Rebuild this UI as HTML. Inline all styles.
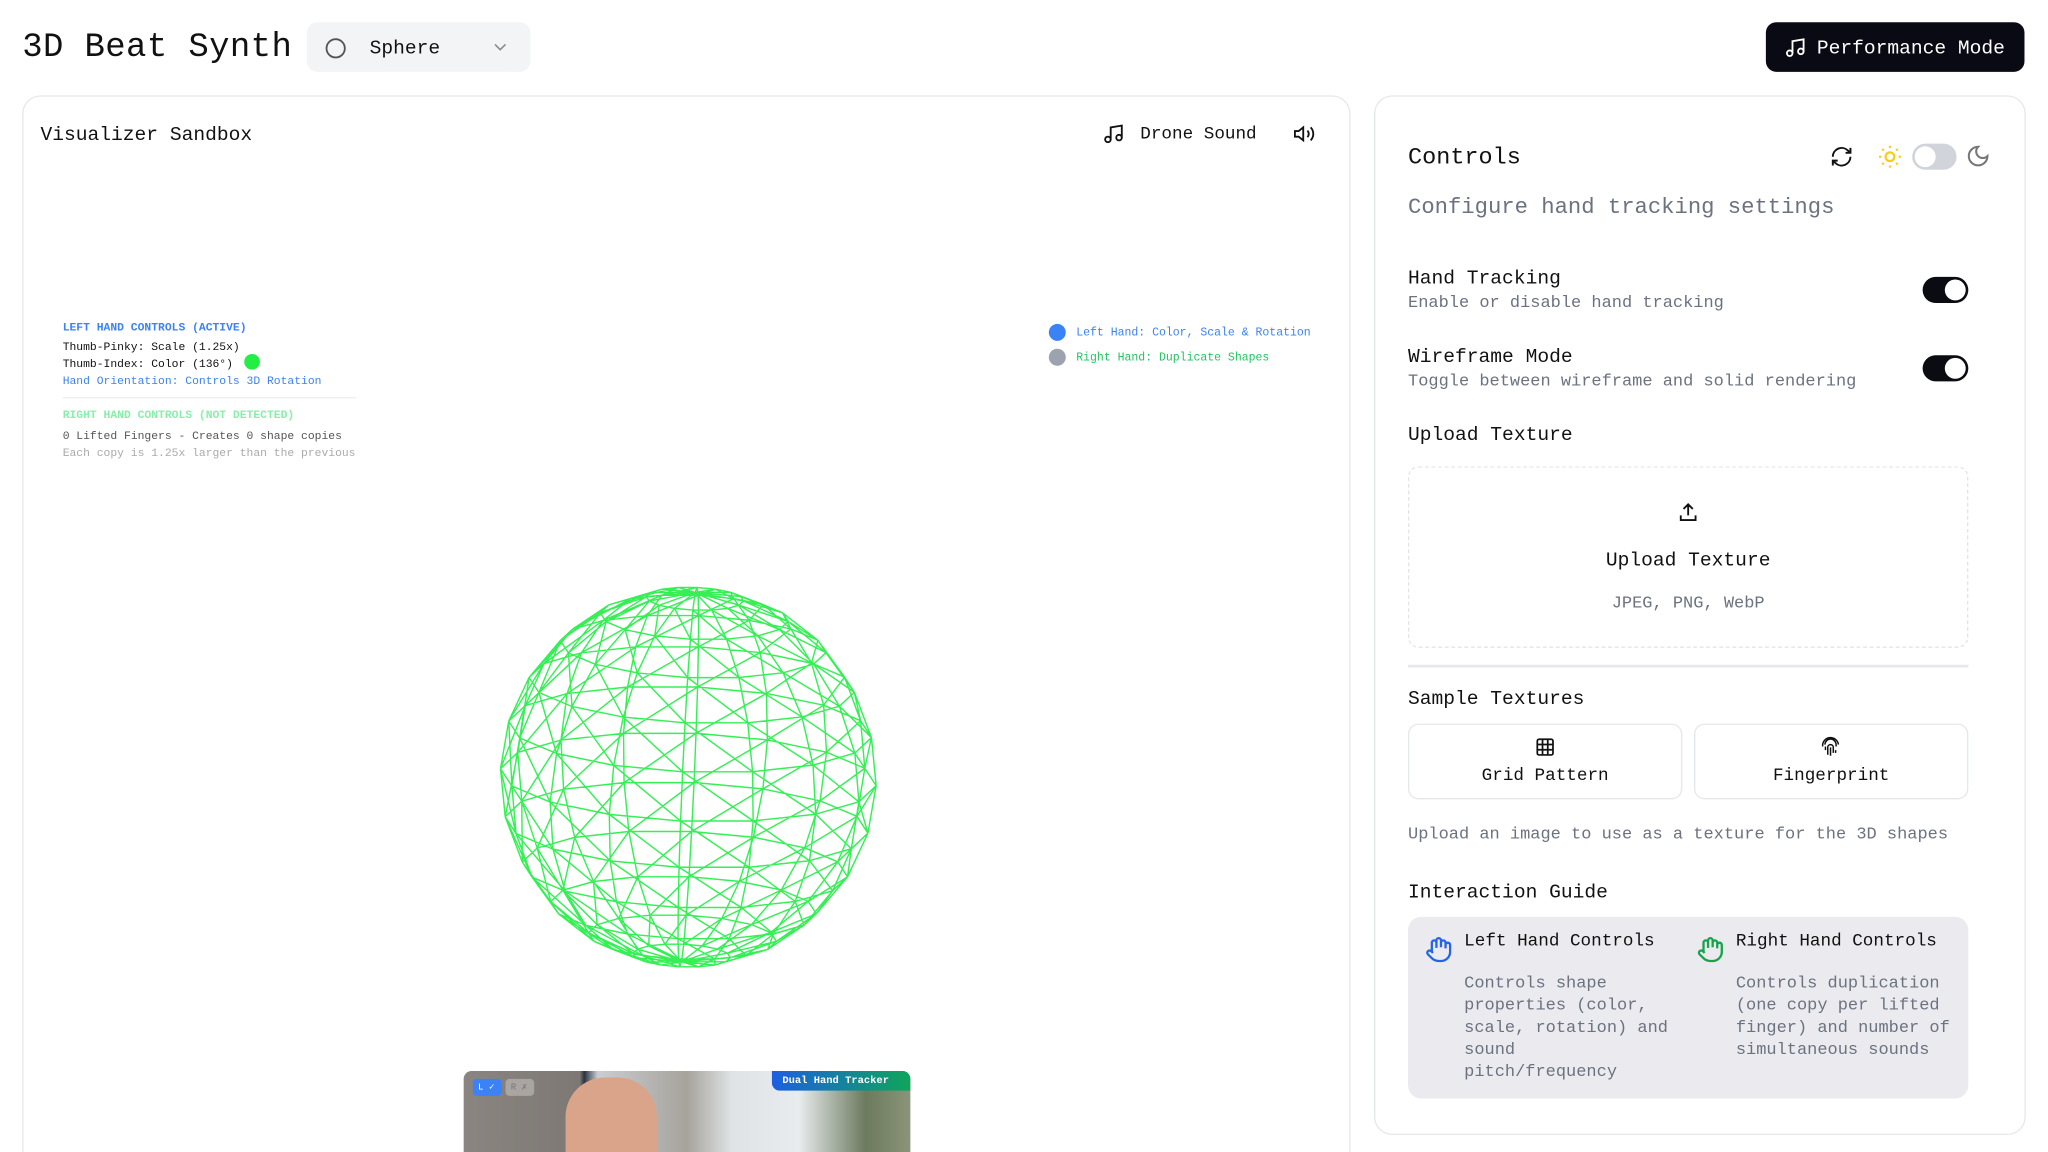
<!DOCTYPE html>
<html><head><meta charset="utf-8">
<style>
*{box-sizing:border-box;margin:0;padding:0}
html,body{width:2048px;height:1152px;overflow:hidden;background:#fff}
#w{position:absolute;left:0;top:0;width:1568px;height:882px;overflow:hidden;transform:scale(1.306122);transform-origin:0 0;font-family:"Liberation Mono",monospace;color:#111}
.a{position:absolute;white-space:nowrap}
.g{color:#6b7280}
.tog{position:absolute;width:35px;height:20px;border-radius:10px;background:#0b0b12}
.tog:after{content:"";position:absolute;right:2px;top:2px;width:16px;height:16px;border-radius:50%;background:#fff}
</style></head><body><div id="w">
<div class="a" style="left:17px;top:21px;font-size:26px;letter-spacing:0.3px">3D Beat Synth</div>
<div class="a" style="left:235px;top:17px;width:171px;height:38px;background:#f3f4f6;border-radius:8px"></div>
<svg class="a" style="left:248px;top:28px" width="18" height="18"><circle cx="9" cy="9" r="7" fill="none" stroke="#555" stroke-width="1.4"/></svg>
<div class="a" style="left:283px;top:29px;font-size:15px">Sphere</div>
<svg class="a" style="left:377px;top:31px" width="12" height="10"><path d="M2 3l4 4 4-4" fill="none" stroke="#888" stroke-width="1.2"/></svg>
<div class="a" style="left:1352px;top:17px;width:198px;height:38px;background:#0a0a14;border-radius:8px"></div>
<svg class="a" style="left:1366px;top:28px" width="17" height="17" viewBox="0 0 24 24" fill="none" stroke="#fff" stroke-width="2"><path d="M9 18V5l12-2v13"/><circle cx="6" cy="18" r="3"/><circle cx="18" cy="16" r="3"/></svg>
<div class="a" style="left:1391px;top:29px;font-size:15px;color:#fff">Performance Mode</div>

<div class="a" style="left:17px;top:73px;width:1017px;height:900px;border:1px solid #e5e7eb;border-radius:14px"></div>
<div class="a" style="left:31px;top:95px;font-size:15px">Visualizer Sandbox</div>
<svg class="a" style="left:844px;top:94px" width="17" height="17" viewBox="0 0 24 24" fill="none" stroke="#111" stroke-width="2"><path d="M9 18V5l12-2v13"/><circle cx="6" cy="18" r="3"/><circle cx="18" cy="16" r="3"/></svg>
<div class="a" style="left:873px;top:96px;font-size:13.5px">Drone Sound</div>
<svg class="a" style="left:990px;top:94px" width="17" height="17" viewBox="0 0 24 24" fill="none" stroke="#111" stroke-width="2"><path d="M11 5L6 9H2v6h4l5 4z"/><path d="M15.5 8.5a5 5 0 0 1 0 7M19 5a10 10 0 0 1 0 14"/></svg>

<div class="a" style="left:48px;top:246px;font-size:8.7px;font-weight:bold;color:#3b82f6">LEFT HAND CONTROLS (ACTIVE)</div>
<div class="a" style="left:48px;top:261px;font-size:8.7px">Thumb-Pinky: Scale (1.25x)</div>
<div class="a" style="left:48px;top:274px;font-size:8.7px">Thumb-Index: Color (136°)</div>
<div class="a" style="left:187px;top:271px;width:12px;height:12px;border-radius:50%;background:#22ee44"></div>
<div class="a" style="left:48px;top:287px;font-size:8.7px;color:#3b82f6">Hand Orientation: Controls 3D Rotation</div>
<div class="a" style="left:48px;top:304px;width:225px;height:1px;background:#eee"></div>
<div class="a" style="left:48px;top:313px;font-size:8.7px;font-weight:bold;color:#86efac">RIGHT HAND CONTROLS (NOT DETECTED)</div>
<div class="a" style="left:48px;top:329px;font-size:8.7px;color:#555">0 Lifted Fingers - Creates 0 shape copies</div>
<div class="a" style="left:48px;top:342px;font-size:8.7px;color:#aaa">Each copy is 1.25x larger than the previous</div>

<div class="a" style="left:803px;top:248px;width:13px;height:13px;border-radius:50%;background:#3b82f6"></div>
<div class="a" style="left:824px;top:250px;font-size:8.8px;color:#3b82f6">Left Hand: Color, Scale &amp; Rotation</div>
<div class="a" style="left:803px;top:267px;width:13px;height:13px;border-radius:50%;background:#9ca3af"></div>
<div class="a" style="left:824px;top:269px;font-size:8.8px;color:#22c55e">Right Hand: Duplicate Shapes</div>

<svg id="sph" class="a" style="left:372px;top:440px" width="310" height="310"></svg>

<div class="a" style="left:355px;top:820px;width:342px;height:70px;border-radius:6px;overflow:hidden;background:linear-gradient(90deg,#8a8580 0%,#7d7873 26%,#2a3340 27%,#c9cdd2 30%,#a7a39c 50%,#dfe3e5 60%,#e8ecee 75%,#6c7a5e 90%,#8a9478 100%)">
<div class="a" style="left:78px;top:5px;width:70px;height:70px;border-radius:30px 30px 0 0;background:#d9a48a"></div>
<div class="a" style="left:7px;top:6px;width:22px;height:13px;border-radius:3px;background:#3b82f6;color:#fff;font-size:7px;padding:2px 4px">L ✓</div>
<div class="a" style="left:32px;top:6px;width:22px;height:13px;border-radius:3px;background:rgba(255,255,255,.3);color:#777;font-size:7px;padding:2px 4px">R ✗</div>
<div class="a" style="left:236px;top:0;width:106px;height:15px;border-radius:0 0 0 6px;background:linear-gradient(90deg,#1d5fe0,#0ea55a);color:#fff;font-size:8px;font-weight:bold;padding:3px 8px">Dual Hand Tracker</div>
</div>

<div class="a" style="left:1052px;top:73px;width:499px;height:796px;border:1px solid #e5e7eb;border-radius:14px"></div>
<div class="a" style="left:1078px;top:111px;font-size:18px">Controls</div>
<svg class="a" style="left:1401px;top:111px" width="18" height="18" viewBox="0 0 24 24" fill="none" stroke="#111" stroke-width="2"><path d="M3 12a9 9 0 0 1 15-6.7L21 8M21 3v5h-5M21 12a9 9 0 0 1-15 6.7L3 16M3 21v-5h5"/></svg>
<svg class="a" style="left:1437px;top:110px" width="20" height="20" viewBox="0 0 24 24" fill="none" stroke="#facc15" stroke-width="2"><circle cx="12" cy="12" r="4"/><path d="M12 2v2M12 20v2M4.9 4.9l1.4 1.4M17.7 17.7l1.4 1.4M2 12h2M20 12h2M4.9 19.1l1.4-1.4M17.7 6.3l1.4-1.4"/></svg>
<div class="a" style="left:1464px;top:110px;width:34px;height:20px;border-radius:10px;background:#d1d5db"><div class="a" style="left:2px;top:2px;width:16px;height:16px;border-radius:50%;background:#fff"></div></div>
<svg class="a" style="left:1505px;top:110px" width="19" height="19" viewBox="0 0 24 24" fill="none" stroke="#777" stroke-width="2"><path d="M12 3a6 6 0 0 0 9 9 9 9 0 1 1-9-9z"/></svg>
<div class="a g" style="left:1078px;top:150px;font-size:17px">Configure hand tracking settings</div>

<div class="a" style="left:1078px;top:205px;font-size:15px">Hand Tracking</div>
<div class="a g" style="left:1078px;top:224px;font-size:13px">Enable or disable hand tracking</div>
<div class="tog" style="left:1472px;top:212px"></div>
<div class="a" style="left:1078px;top:265px;font-size:15px">Wireframe Mode</div>
<div class="a g" style="left:1078px;top:284px;font-size:13px">Toggle between wireframe and solid rendering</div>
<div class="tog" style="left:1472px;top:272px"></div>
<div class="a" style="left:1078px;top:325px;font-size:15px">Upload Texture</div>
<div class="a" style="left:1078px;top:357px;width:429px;height:139px;border:1.5px dashed #e2e4e8;border-radius:8px"></div>
<svg class="a" style="left:1284px;top:384px" width="17" height="17" viewBox="0 0 24 24" fill="none" stroke="#111" stroke-width="2"><path d="M12 15V3M7 8l5-5 5 5M4 15v5h16v-5"/></svg>
<div class="a" style="left:1078px;top:421px;width:429px;text-align:center;font-size:15px">Upload Texture</div>
<div class="a g" style="left:1078px;top:454px;width:429px;text-align:center;font-size:13px">JPEG, PNG, WebP</div>
<div class="a" style="left:1078px;top:509px;width:429px;height:1.5px;background:#e5e7eb"></div>
<div class="a" style="left:1078px;top:527px;font-size:15px">Sample Textures</div>
<div class="a" style="left:1078px;top:554px;width:210px;height:58px;border:1px solid #e5e7eb;border-radius:8px"></div>
<div class="a" style="left:1297px;top:554px;width:210px;height:58px;border:1px solid #e5e7eb;border-radius:8px"></div>
<svg class="a" style="left:1175px;top:564px" width="16" height="16" viewBox="0 0 24 24" fill="none" stroke="#111" stroke-width="2"><rect x="3" y="3" width="18" height="18" rx="2"/><path d="M3 9h18M3 15h18M9 3v18M15 3v18"/></svg>
<svg class="a" style="left:1393px;top:563px" width="17" height="17" viewBox="0 0 24 24" fill="none" stroke="#111" stroke-width="1.6"><path d="M6 10a6 6 0 0 1 12 0v2M3.5 12a8.5 8.5 0 0 1 17-2M9 21v-8a3 3 0 0 1 6 0v6M12 13v9M6.5 16v-4M17.5 16v3"/></svg>
<div class="a" style="left:1078px;top:587px;width:210px;text-align:center;font-size:13.5px">Grid Pattern</div>
<div class="a" style="left:1297px;top:587px;width:210px;text-align:center;font-size:13.5px">Fingerprint</div>
<div class="a g" style="left:1078px;top:631px;font-size:13px">Upload an image to use as a texture for the 3D shapes</div>
<div class="a" style="left:1078px;top:675px;font-size:15px">Interaction Guide</div>
<div class="a" style="left:1078px;top:702px;width:429px;height:139px;background:#ebebef;border-radius:10px"></div>
<svg class="a" style="left:1091px;top:716px" width="21" height="22" viewBox="0 0 24 24" fill="none" stroke="#2563eb" stroke-width="2"><path d="M18 11V6a2 2 0 0 0-4 0M14 10V4a2 2 0 0 0-4 0v2M10 10.5V6a2 2 0 0 0-4 0v8M18 8a2 2 0 1 1 4 0v6a8 8 0 0 1-8 8h-2c-2.8 0-4.5-.9-6-2.4l-3.6-3.6a2 2 0 0 1 2.8-2.8L7 15"/></svg>
<svg class="a" style="left:1299px;top:716px" width="21" height="22" viewBox="0 0 24 24" fill="none" stroke="#16a34a" stroke-width="2"><path d="M18 11V6a2 2 0 0 0-4 0M14 10V4a2 2 0 0 0-4 0v2M10 10.5V6a2 2 0 0 0-4 0v8M18 8a2 2 0 1 1 4 0v6a8 8 0 0 1-8 8h-2c-2.8 0-4.5-.9-6-2.4l-3.6-3.6a2 2 0 0 1 2.8-2.8L7 15"/></svg>
<div class="a" style="left:1121px;top:714px;font-size:13.5px">Left Hand Controls</div>
<div class="a" style="left:1329px;top:714px;font-size:13.5px">Right Hand Controls</div>
<div class="a g" style="left:1121px;top:744px;font-size:13px;line-height:17px;white-space:pre">Controls shape
properties (color,
scale, rotation) and
sound
pitch/frequency</div>
<div class="a g" style="left:1329px;top:744px;font-size:13px;line-height:17px;white-space:pre">Controls duplication
(one copy per lifted
finger) and number of
simultaneous sounds</div>
</div>
<script>
(function(){
var s=document.getElementById('sph'),W=16,H=12,R=144,cx=155,cy=155,pts=[];
var ax=0.25,ay=0.35,az=0.05;
function rot(p){var x=p[0],y=p[1],z=p[2],t;
t=y*Math.cos(ax)-z*Math.sin(ax);z=y*Math.sin(ax)+z*Math.cos(ax);y=t;
t=x*Math.cos(ay)+z*Math.sin(ay);z=-x*Math.sin(ay)+z*Math.cos(ay);x=t;
t=x*Math.cos(az)-y*Math.sin(az);y=x*Math.sin(az)+y*Math.cos(az);x=t;
return [cx+x*R,cy-y*R*1.01];}
for(var i=0;i<=H;i++){pts[i]=[];var th=Math.PI*i/H;for(var j=0;j<=W;j++){var ph=2*Math.PI*j/W;
pts[i][j]=rot([Math.sin(th)*Math.cos(ph),Math.cos(th),Math.sin(th)*Math.sin(ph)]);}}
var d='';function L(a,b){d+='M'+a[0].toFixed(1)+' '+a[1].toFixed(1)+'L'+b[0].toFixed(1)+' '+b[1].toFixed(1);}
for(i=0;i<H;i++)for(j=0;j<W;j++){L(pts[i][j],pts[i+1][j]);if(i>0)L(pts[i][j],pts[i][j+1]);if(i>0&&i<H-1)L(pts[i][j+1],pts[i+1][j]);}
s.innerHTML='<path d="'+d+'" fill="none" stroke="#35ef55" stroke-width="1.1"/>';
})();
</script>
</body></html>
